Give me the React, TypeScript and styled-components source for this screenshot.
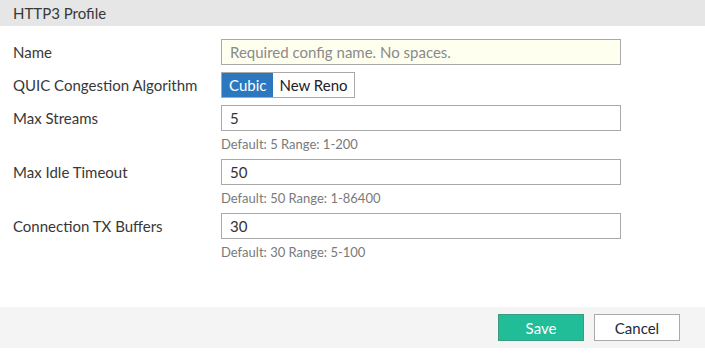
import styled, { createGlobalStyle } from "styled-components";
import { useState } from "react";

const GlobalStyle = createGlobalStyle`
  html, body {
    margin: 0;
    padding: 0;
    background: #ffffff;
  }

  body {
    font-family: Lato, "Open Sans", "Liberation Sans", sans-serif;
    font-size: 15px;
    color: #333333;
  }
`;

const Panel = styled.div`
  width: 705px;
  height: 353px;
  display: flex;
  flex-direction: column;
  background: #ffffff;
`;

const Header = styled.div`
  height: 26px;
  line-height: 26px;
  padding-left: 13px;
  background: #e6e6e6;
  font-size: 15px;
  color: #383838;
`;

const Form = styled.div`
  flex: 1;
  padding: 13px 0 0 13px;
`;

const Row = styled.div`
  display: grid;
  grid-template-columns: 208px 400px;
  margin-bottom: 7px;
`;

const Label = styled.label`
  line-height: 26px;
  font-size: 15px;
  color: #383838;
  white-space: nowrap;
`;

const Field = styled.div`
  display: flex;
  flex-direction: column;
`;

const TextInput = styled.input<{ $required?: boolean }>`
  box-sizing: border-box;
  width: 400px;
  height: 26px;
  padding: 0 8px;
  margin: 0;
  border: 1px solid #aaaaaa;
  border-radius: 0;
  background: ${(props) => (props.$required ? "#fffff0" : "#ffffff")};
  font-family: inherit;
  font-size: 15px;
  color: #333333;
  outline: none;

  &::placeholder {
    color: #8a8a8a;
  }
`;

const Hint = styled.div`
  height: 21px;
  line-height: 16px;
  padding-top: 5px;
  box-sizing: border-box;
  font-size: 13px;
  color: #7a7a7a;
`;

const Toggle = styled.div`
  display: inline-flex;
  justify-self: start;
  border: 1px solid #aaaaaa;
  height: 26px;
  box-sizing: border-box;
`;

const ToggleOption = styled.button<{ $active?: boolean }>`
  border: none;
  margin: 0;
  padding: 0 ${(props) => (props.$active ? "7px" : "6px")};
  height: 24px;
  font-family: inherit;
  font-size: 15px;
  background: ${(props) => (props.$active ? "#2b78be" : "#ffffff")};
  color: ${(props) => (props.$active ? "#ffffff" : "#222222")};
  cursor: pointer;
`;

const Footer = styled.div`
  height: 41px;
  margin-bottom: 5px;
  display: flex;
  justify-content: flex-end;
  align-items: center;
  gap: 10px;
  padding-right: 25px;
  background: #f4f4f4;
`;

const Button = styled.button<{ $primary?: boolean }>`
  box-sizing: border-box;
  width: 86px;
  height: 27px;
  margin: 0;
  border: 1px solid ${(props) => (props.$primary ? "#3a9b80" : "#aaaaaa")};
  background: ${(props) => (props.$primary ? "#20bd98" : "#ffffff")};
  color: ${(props) => (props.$primary ? "#ffffff" : "#222a38")};
  font-family: inherit;
  font-size: 15px;
  cursor: pointer;
`;

const numericFields = [
  { label: "Max Streams", value: "5", hint: "Default: 5 Range: 1-200" },
  { label: "Max Idle Timeout", value: "50", hint: "Default: 50 Range: 1-86400" },
  { label: "Connection TX Buffers", value: "30", hint: "Default: 30 Range: 5-100" },
];

const App = () => {
  const [algorithm, setAlgorithm] = useState("cubic");

  return (
    <>
      <GlobalStyle />
      <Panel>
        <Header>HTTP3 Profile</Header>
        <Form>
          <Row>
            <Label>Name</Label>
            <TextInput $required placeholder="Required config name. No spaces." />
          </Row>
          <Row>
            <Label>QUIC Congestion Algorithm</Label>
            <Toggle>
              <ToggleOption
                $active={algorithm === "cubic"}
                onClick={() => setAlgorithm("cubic")}
              >
                Cubic
              </ToggleOption>
              <ToggleOption
                $active={algorithm === "newreno"}
                onClick={() => setAlgorithm("newreno")}
              >
                New Reno
              </ToggleOption>
            </Toggle>
          </Row>
          {numericFields.map((f) => (
            <Row key={f.label}>
              <Label>{f.label}</Label>
              <Field>
                <TextInput defaultValue={f.value} />
                <Hint>{f.hint}</Hint>
              </Field>
            </Row>
          ))}
        </Form>
        <Footer>
          <Button $primary>Save</Button>
          <Button>Cancel</Button>
        </Footer>
      </Panel>
    </>
  );
};

export default App;
